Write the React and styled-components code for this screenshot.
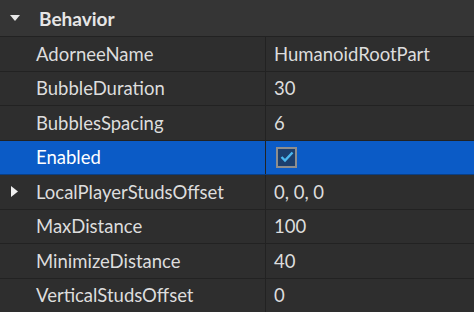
import React from "react";
import styled, { createGlobalStyle } from "styled-components";

const GlobalStyle = createGlobalStyle`
  html, body {
    margin: 0;
    padding: 0;
    background: #2e2e2e;
  }
  body {
    font-family: "Lato", "Liberation Sans", sans-serif;
  }
`;

const props = [
  { name: "AdorneeName", value: "HumanoidRootPart" },
  { name: "BubbleDuration", value: "30" },
  { name: "BubblesSpacing", value: "6" },
  { name: "Enabled", value: true, selected: true },
  { name: "LocalPlayerStudsOffset", value: "0, 0, 0", expandable: true },
  { name: "MaxDistance", value: "100" },
  { name: "MinimizeDistance", value: "40" },
  { name: "VerticalStudsOffset", value: "0" },
];

export default function App() {
  return (
    <>
      <GlobalStyle />
      <Panel>
        <Header>
          <Caret viewBox="0 0 10 6">
            <path d="M0 0 L10 0 L5 6 Z" fill="#e8e8e8" />
          </Caret>
          <HeaderTitle>Behavior</HeaderTitle>
        </Header>
        {props.map((p) => (
          <Row key={p.name} $selected={p.selected}>
            <NameCell $selected={p.selected}>
              {p.expandable && (
                <Arrow viewBox="0 0 7 11">
                  <path d="M0 0 L7 5.5 L0 11 Z" fill="#f0f0f0" />
                </Arrow>
              )}
              {p.name}
            </NameCell>
            <ValueCell>
              {p.value === true ? (
                <CheckBox>
                  <svg width="14" height="12" viewBox="0 0 14 12">
                    <path
                      d="M1.5 6 L5 9.5 L12.5 1.5"
                      stroke="#4cb8f0"
                      strokeWidth="2.4"
                      fill="none"
                    />
                  </svg>
                </CheckBox>
              ) : (
                p.value
              )}
            </ValueCell>
          </Row>
        ))}
      </Panel>
    </>
  );
}

const Panel = styled.div`
  width: 474px;
  height: 312px;
  overflow: hidden;
  background: #2e2e2e;
  display: flex;
  flex-direction: column;
`;

const Header = styled.div`
  height: 36px;
  flex: none;
  display: flex;
  align-items: center;
  background: #353535;
  border-bottom: 1px solid #222222;
`;

const Caret = styled.svg`
  width: 10px;
  height: 6px;
  margin-left: 10px;
  margin-right: 19px;
`;

const HeaderTitle = styled.span`
  font-weight: 700;
  font-size: 19px;
  color: #e6e6e6;
`;

const Row = styled.div`
  height: 33.5px;
  flex: none;
  display: grid;
  grid-template-columns: 266px 1fr;
  background: ${(p) => (p.$selected ? "#0b5bc6" : "#2e2e2e")};
  border-bottom: 1px solid ${(p) => (p.$selected ? "#0a3f84" : "#222222")};
  font-size: 18.5px;
  color: #dddddd;
`;

const NameCell = styled.div`
  position: relative;
  display: flex;
  align-items: center;
  padding-left: 36px;
  border-right: 1px solid #222222;
  color: ${(p) => (p.$selected ? "#ffffff" : "#dddddd")};
`;

const Arrow = styled.svg`
  position: absolute;
  left: 11px;
  width: 7px;
  height: 11px;
`;

const ValueCell = styled.div`
  display: flex;
  align-items: center;
  padding-left: 8px;
`;

const CheckBox = styled.div`
  width: 17px;
  height: 17px;
  border: 2px solid #8e8e8e;
  background: #1c3f6e;
  display: flex;
  align-items: center;
  justify-content: center;
  margin-left: 2px;
`;
